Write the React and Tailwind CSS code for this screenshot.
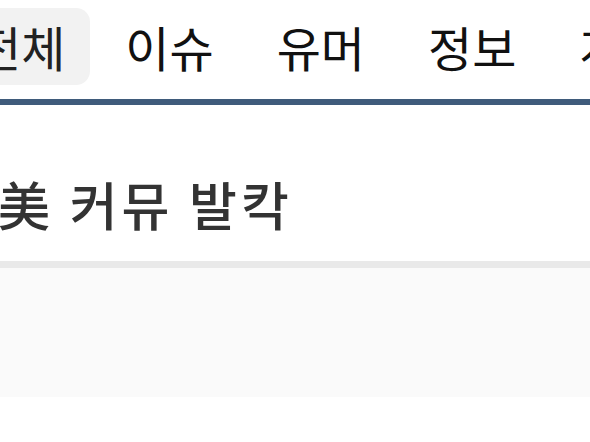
import React from "react";

const tabs = ["전체", "이슈", "유머", "정보", "게임"];

const App = () => {
  return (
    <div className="w-[590px] h-[442px] overflow-hidden bg-white font-['Noto_Sans_CJK_KR',sans-serif]">
      {/* Category tabs */}
      <div className="h-[99px] flex items-center gap-[7px] ml-[-48px] whitespace-nowrap">
        {tabs.map((t, i) => (
          <div
            key={t}
            className={
              i === 0
                ? "h-[77px] mt-[-7px] px-[25px] flex items-center rounded-[14px] bg-[#f2f2f2] text-[48px] text-[#222] shrink-0"
                : "h-[77px] mt-[-7px] px-[28px] flex items-center text-[48px] text-[#111] shrink-0"
            }
          >
            {t}
          </div>
        ))}
      </div>
      <div className="h-[6px] bg-[#3f5b7b]" />

      {/* Title */}
      <div className="h-[156px] pt-[73px]">
        <h1 className="ml-[-2px] text-[52px] leading-[52px] font-medium text-[#333] tracking-[4px] whitespace-nowrap">美 커뮤 발칵</h1>
      </div>

      <div className="h-[7px] bg-[#e9e9e9]" />
      <div className="h-[129px] bg-[#fafafa]" />
    </div>
  );
};

export default App;
